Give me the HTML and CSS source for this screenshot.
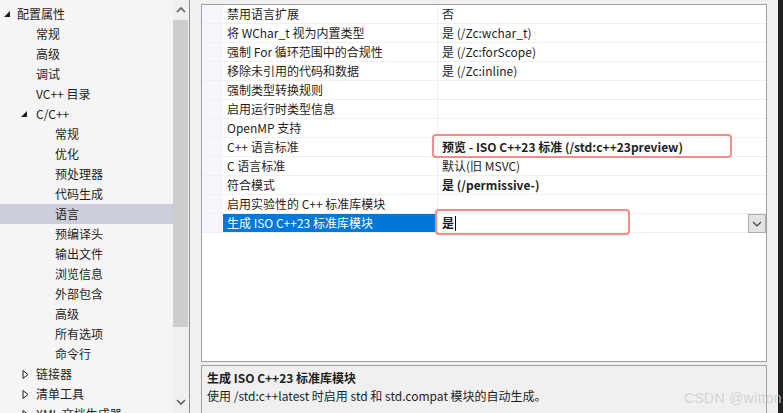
FILE: index.html
```html
<!DOCTYPE html>
<html>
<head>
  <title>属性页</title>
  <link rel="stylesheet" href="styles.css">
</head>
<body>

<div class="window">
  <aside class="tree-pane">
    <ul class="tree">
      <li class="lv0"><svg class="tw" width="7" height="7" viewBox="0 0 7 7"><polygon points="6,0 6,6 0,6" fill="#1e1e1e"/></svg>配置属性</li>
      <li class="lv1">常规</li>
      <li class="lv1">高级</li>
      <li class="lv1">调试</li>
      <li class="lv1">VC++ 目录</li>
      <li class="lv1"><svg class="tw" width="7" height="7" viewBox="0 0 7 7"><polygon points="6,0 6,6 0,6" fill="#1e1e1e"/></svg>C/C++</li>
      <li class="lv2">常规</li>
      <li class="lv2">优化</li>
      <li class="lv2">预处理器</li>
      <li class="lv2">代码生成</li>
      <li class="lv2 selected">语言</li>
      <li class="lv2">预编译头</li>
      <li class="lv2">输出文件</li>
      <li class="lv2">浏览信息</li>
      <li class="lv2">外部包含</li>
      <li class="lv2">高级</li>
      <li class="lv2">所有选项</li>
      <li class="lv2">命令行</li>
      <li class="lv1"><svg class="tw closed" width="7" height="9" viewBox="0 0 7 9"><polygon points="1,0.5 6,4.5 1,8.5" fill="none" stroke="#1e1e1e"/></svg>链接器</li>
      <li class="lv1"><svg class="tw closed" width="7" height="9" viewBox="0 0 7 9"><polygon points="1,0.5 6,4.5 1,8.5" fill="none" stroke="#1e1e1e"/></svg>清单工具</li>
      <li class="lv1"><svg class="tw closed" width="7" height="9" viewBox="0 0 7 9"><polygon points="1,0.5 6,4.5 1,8.5" fill="none" stroke="#1e1e1e"/></svg>XML 文档生成器</li>
    </ul>
    <div class="vscroll">
      <svg class="sb-arrow" width="16" height="18" viewBox="0 0 16 18"><polyline points="4,12 8,8 12,12" fill="none" stroke="#606060" stroke-width="1.6"/></svg>
      <div class="thumb"></div>
      <div class="track"></div>
      <svg class="sb-arrow" width="16" height="18" viewBox="0 0 16 18"><polyline points="4,5 8,9 12,5" fill="none" stroke="#606060" stroke-width="1.6"/></svg>
    </div>
  </aside>

  <main class="props-pane">
    <div class="grid">
      <div class="row"><div class="gutter"></div><div class="name">禁用语言扩展</div><div class="value">否</div></div>
      <div class="row"><div class="gutter"></div><div class="name">将 WChar_t 视为内置类型</div><div class="value">是 (/Zc:wchar_t)</div></div>
      <div class="row"><div class="gutter"></div><div class="name">强制 For 循环范围中的合规性</div><div class="value">是 (/Zc:forScope)</div></div>
      <div class="row"><div class="gutter"></div><div class="name">移除未引用的代码和数据</div><div class="value">是 (/Zc:inline)</div></div>
      <div class="row"><div class="gutter"></div><div class="name">强制类型转换规则</div><div class="value"></div></div>
      <div class="row"><div class="gutter"></div><div class="name">启用运行时类型信息</div><div class="value"></div></div>
      <div class="row"><div class="gutter"></div><div class="name">OpenMP 支持</div><div class="value"></div></div>
      <div class="row"><div class="gutter"></div><div class="name">C++ 语言标准</div><div class="value bold">预览 - ISO C++23 标准 (/std:c++23preview)</div></div>
      <div class="row"><div class="gutter"></div><div class="name">C 语言标准</div><div class="value">默认(旧 MSVC)</div></div>
      <div class="row"><div class="gutter"></div><div class="name">符合模式</div><div class="value bold">是 (/permissive-)</div></div>
      <div class="row"><div class="gutter"></div><div class="name">启用实验性的 C++ 标准库模块</div><div class="value"></div></div>
      <div class="row active">
        <div class="gutter"></div>
        <div class="name">生成 ISO C++23 标准库模块</div>
        <div class="value bold edit">是<span class="caret"></span>
          <span class="drop"><svg width="10" height="6" viewBox="0 0 10 6"><polyline points="1,1 5,5 9,1" fill="none" stroke="#404040" stroke-width="1.2"/></svg></span>
        </div>
      </div>

      <div class="mark mark-std"></div>
      <div class="mark mark-module"></div>
    </div>

    <div class="desc">
      <div class="desc-title">生成 ISO C++23 标准库模块</div>
      <div class="desc-text">使用 /std:c++latest 时启用 std 和 std.compat 模块的自动生成。</div>
    </div>
  </main>

  <div class="edge"></div>
</div>

<div class="watermark">CSDN @witton</div>

</body>
</html>
```

FILE: styles.css
```css
html, body {
  margin: 0;
  padding: 0;
  height: 100%;
  overflow: hidden;
}
body {
  font-family: "Noto Sans CJK SC", "Noto Sans", sans-serif;
  font-size: 12px;
  color: #1e1e1e;
  background-color: #f0f0f0;
  position: relative;
}
.window {
  display: flex;
  height: 413px;
  overflow: hidden;
}

/* left: category tree */
.tree-pane {
  width: 189px;
  flex: none;
  display: flex;
  border-right: 1px solid #8f8f8f;
  background-color: #f5f5f5;
}
.tree {
  list-style: none;
  margin: 0;
  padding: 4px 0 0 0;
  width: 173px;
  overflow: hidden;
}
.tree li {
  height: 20px;
  line-height: 20px;
  white-space: nowrap;
  position: relative;
}
.tree .lv0 { padding-left: 17px; }
.tree .lv1 { padding-left: 36px; }
.tree .lv2 { padding-left: 55px; }
.tree li.selected {
  background-color: #cccedb;
}
.tw {
  position: absolute;
  top: 7px;
}
.lv0 .tw { left: 4px; }
.lv1 .tw { left: 21px; }
.lv1 .tw.closed { left: 22px; top: 6px; }

.vscroll {
  width: 16px;
  display: flex;
  flex-direction: column;
  background-color: #f0f0f0;
}
.sb-arrow {
  flex: none;
  display: block;
}
.thumb {
  flex: none;
  height: 307px;
  margin: 2px 1px 0 0;
  background-color: #cdcdcd;
}
.track {
  flex: 1;
}

/* right: property grid */
.props-pane {
  flex: 1;
  padding: 4px 11px 0 11px;
  display: flex;
  flex-direction: column;
  overflow: hidden;
}
.grid {
  position: relative;
  flex: none;
  height: 356px;
  border: 1px solid #a0a0a0;
  background-color: #fff;
}
.row {
  display: flex;
  height: 18px;
  line-height: 18px;
  border-bottom: 1px solid #f0f0f0;
  white-space: nowrap;
}
.row .gutter {
  width: 21px;
  flex: none;
  background-color: #f5f7fb;
}
.row .name {
  width: 210px;
  flex: none;
  padding-left: 4px;
  border-right: 1px solid #f0f0f0;
}
.row .value {
  flex: 1;
  padding-left: 4px;
  position: relative;
}
.bold {
  font-weight: 700;
}
.row.active .name {
  background-color: #0078d7;
  color: #fff;
}
.caret {
  display: inline-block;
  width: 1px;
  height: 15px;
  margin-left: 1px;
  vertical-align: -3px;
  background-color: #000;
}
.drop {
  position: absolute;
  right: 0;
  top: 0;
  width: 16px;
  height: 17px;
  background-color: #e3e3e3;
  border: 1px solid #adadad;
  display: flex;
  align-items: center;
  justify-content: center;
}

/* annotation frames */
.mark {
  position: absolute;
  border: 2px solid #f08c8c;
  border-radius: 4px;
}
.mark-std {
  left: 230px;
  top: 129px;
  width: 296px;
  height: 20px;
}
.mark-module {
  left: 233px;
  top: 204px;
  width: 191px;
  height: 22px;
}

.desc {
  flex: none;
  margin-top: 3px;
  height: 80px;
  border: 1px solid #a0a0a0;
  background-color: #f0f0f0;
  padding: 3px 5px;
  line-height: 18px;
}
.desc-title {
  font-weight: 700;
}

.edge {
  width: 5px;
  flex: none;
  background-color: #1e1e1e;
}

.watermark {
  position: absolute;
  left: 684px;
  top: 390px;
  font-family: "Liberation Sans", sans-serif;
  font-size: 14px;
  letter-spacing: 0.3px;
  color: rgba(205, 205, 205, 0.85);
  white-space: nowrap;
}
```
